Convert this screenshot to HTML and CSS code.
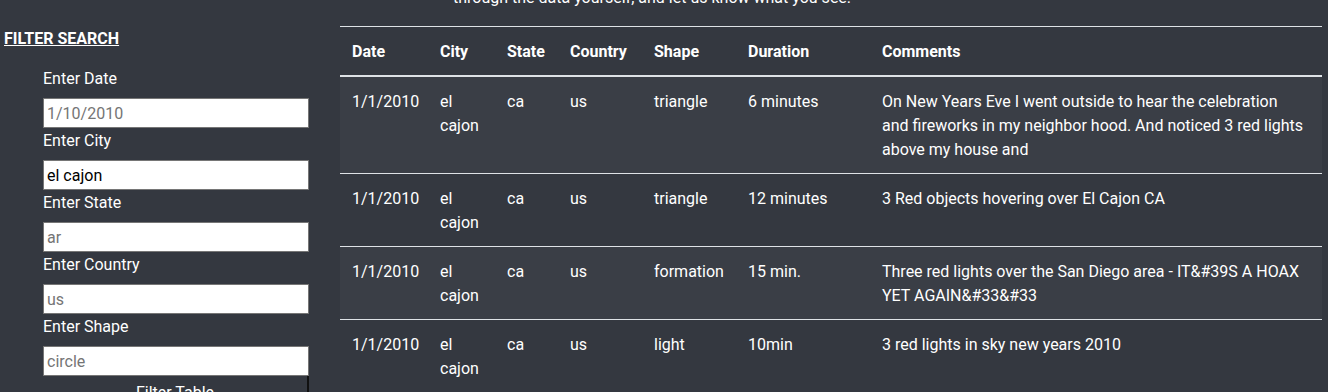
FILE: index.html
```html
<!DOCTYPE html>
<html lang="en">

<head>
  <meta charset="UTF-8">
  <title>UFO Sightings</title>
  <link rel="stylesheet" href="styles.css">
</head>

<body>
  <div class="page">
    <aside class="sidebar">
      <h4 class="filter-title">FILTER SEARCH</h4>
      <form class="filters">
        <label for="datetime">Enter Date</label>
        <input type="text" id="datetime" placeholder="1/10/2010">
        <label for="city">Enter City</label>
        <input type="text" id="city" value="el cajon">
        <label for="state">Enter State</label>
        <input type="text" id="state" placeholder="ar">
        <label for="country">Enter Country</label>
        <input type="text" id="country" placeholder="us">
        <label for="shape">Enter Shape</label>
        <input type="text" id="shape" placeholder="circle">
        <button type="button" id="filter-btn">Filter Table</button>
      </form>
    </aside>

    <main class="content">
      <p class="intro">through the data yourself, and let us know what you see.</p>

      <table class="ufo-table">
        <colgroup>
          <col style="width: 88px">
          <col style="width: 67px">
          <col style="width: 63px">
          <col style="width: 84px">
          <col style="width: 94px">
          <col style="width: 134px">
          <col>
        </colgroup>
        <thead>
          <tr>
            <th>Date</th>
            <th>City</th>
            <th>State</th>
            <th>Country</th>
            <th>Shape</th>
            <th>Duration</th>
            <th>Comments</th>
          </tr>
        </thead>
        <tbody>
          <tr>
            <td>1/1/2010</td>
            <td>el cajon</td>
            <td>ca</td>
            <td>us</td>
            <td>triangle</td>
            <td>6 minutes</td>
            <td>On New Years Eve I went outside to hear the celebration and fireworks in my neighbor hood. And noticed 3 red lights above my house and</td>
          </tr>
          <tr>
            <td>1/1/2010</td>
            <td>el cajon</td>
            <td>ca</td>
            <td>us</td>
            <td>triangle</td>
            <td>12 minutes</td>
            <td>3 Red objects hovering over El Cajon CA</td>
          </tr>
          <tr>
            <td>1/1/2010</td>
            <td>el cajon</td>
            <td>ca</td>
            <td>us</td>
            <td>formation</td>
            <td>15 min.</td>
            <td>Three red lights over the San Diego area - IT&amp;#39S A HOAX YET AGAIN&amp;#33&amp;#33</td>
          </tr>
          <tr>
            <td>1/1/2010</td>
            <td>el cajon</td>
            <td>ca</td>
            <td>us</td>
            <td>light</td>
            <td>10min</td>
            <td>3 red lights in sky new years 2010</td>
          </tr>
        </tbody>
      </table>
    </main>
  </div>
</body>

</html>
```
FILE: styles.css
```css
body {
  margin: 0;
  background-color: #343840;
  color: #ffffff;
  font-family: Roboto, Arial, sans-serif;
  font-size: 16px;
  line-height: 24px;
}

.page {
  display: flex;
}

.sidebar {
  width: 340px;
  flex-shrink: 0;
  padding-left: 4px;
  box-sizing: border-box;
}

.filter-title {
  margin: 27px 0 15px;
  font-size: 16px;
  font-weight: 700;
  text-decoration: underline;
}

.filters {
  display: flex;
  flex-direction: column;
  margin-left: 39px;
  width: 266px;
}

.filters label {
  padding-top: 1px;
  margin-bottom: 7px;
}

.filters input {
  height: 30px;
  box-sizing: border-box;
  border: 1px solid #767676;
  padding: 1px 3px;
  font-family: inherit;
  font-size: 16px;
  color: #000000;
}

.filters input::placeholder {
  color: #757575;
}

#filter-btn {
  height: 30px;
  background: transparent;
  border: none;
  border-right: 2px solid #111111;
  color: #ffffff;
  font-family: inherit;
  font-size: 16px;
  padding: 2px 0 0;
}

.content {
  width: 982px;
}

.intro {
  margin: -14px 0 16px;
  padding-left: 113px;
}

.ufo-table {
  width: 100%;
  table-layout: fixed;
  border-collapse: collapse;
}

.ufo-table th,
.ufo-table td {
  padding: 13px 12px 11px;
  text-align: left;
  vertical-align: top;
  border-top: 1px solid #dee2e6;
}

.ufo-table th {
  font-weight: 700;
  border-bottom: 2px solid #dee2e6;
}

.ufo-table td:last-child {
  padding-right: 16px;
}

.ufo-table tbody tr:nth-child(odd) {
  background-color: rgba(255, 255, 255, 0.03);
}
```
